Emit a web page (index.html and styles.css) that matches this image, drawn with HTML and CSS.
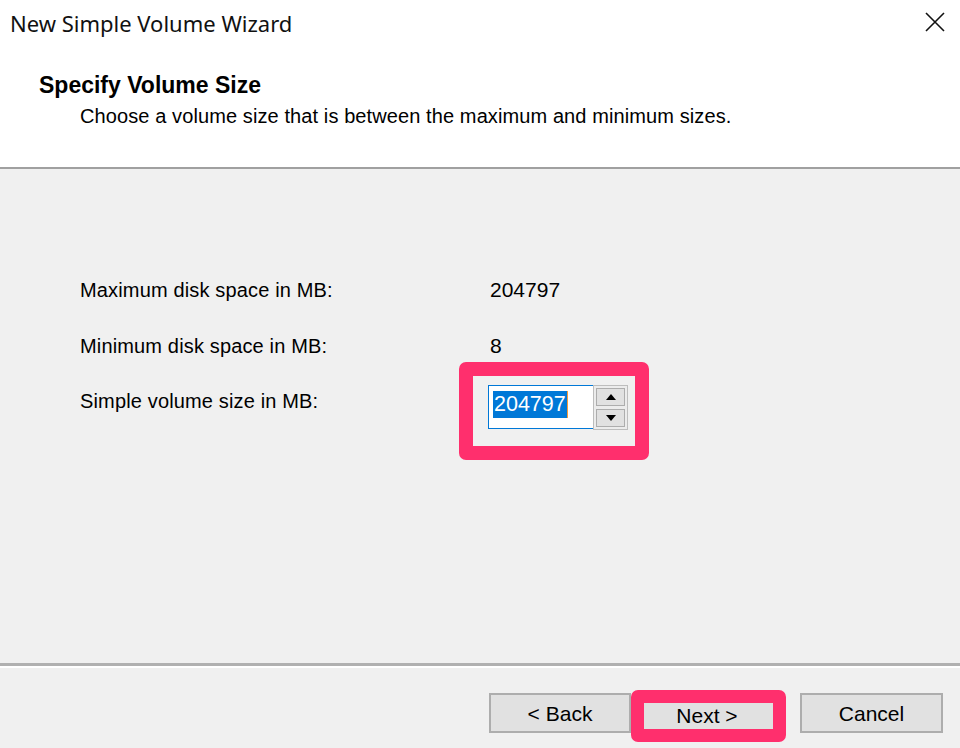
FILE: index.html
```html
<!DOCTYPE html>
<html>
<head>
<meta charset="utf-8">
<title>New Simple Volume Wizard</title>
<link rel="stylesheet" href="styles.css">
</head>
<body>
<div class="window">
  <div class="header">
    <div class="titlebar">
      <div class="title">New Simple Volume Wizard</div>
      <svg class="close" width="20" height="20" viewBox="0 0 20 20"><path d="M1 1 L19 19 M19 1 L1 19" stroke="#111" stroke-width="1.6" fill="none"/></svg>
    </div>
    <div class="heading">Specify Volume Size</div>
    <div class="subheading">Choose a volume size that is between the maximum and minimum sizes.</div>
  </div>
  <div class="content">
    <div class="row row1">
      <div class="label">Maximum disk space in MB:</div>
      <div class="value">204797</div>
    </div>
    <div class="row row2">
      <div class="label">Minimum disk space in MB:</div>
      <div class="value">8</div>
    </div>
    <div class="row row3">
      <div class="label label3">Simple volume size in MB:</div>
      <div class="highlight">
        <div class="spin">
          <div class="field"><span class="sel">204797</span></div>
          <div class="arrows">
            <div class="arrow"><svg width="10" height="6" viewBox="0 0 10 6"><path d="M0 6 L5 0 L10 6 Z" fill="#000"/></svg></div>
            <div class="arrow"><svg width="10" height="6" viewBox="0 0 10 6"><path d="M0 0 L5 6 L10 0 Z" fill="#000"/></svg></div>
          </div>
        </div>
      </div>
    </div>
  </div>
  <div class="sep"></div>
  <div class="footer">
    <div class="btn">&lt; Back</div>
    <div class="btn next">Next &gt;</div>
    <div class="btn cancel">Cancel</div>
  </div>
</div>
</body>
</html>
```
FILE: styles.css
```css
html, body {
  margin: 0;
  padding: 0;
}
body {
  width: 960px;
  height: 748px;
  overflow: hidden;
  background: #f0f0f0;
  font-family: "Liberation Sans", Arial, sans-serif;
  color: #000;
}
.window {
  width: 960px;
  height: 748px;
  display: flex;
  flex-direction: column;
}
.header {
  height: 167px;
  background: #fff;
  border-bottom: 2px solid #a0a0a0;
  box-sizing: content-box;
}
.titlebar {
  display: flex;
  justify-content: space-between;
  align-items: flex-start;
  padding: 8px 15px 0 10px;
  height: 30px;
}
.title {
  font-family: "Noto Sans", "Open Sans", sans-serif;
  font-size: 22px;
  line-height: 30px;
  color: #111;
}
.close {
  margin-top: 4px;
}
.heading {
  margin-top: 33px;
  padding-left: 39px;
  font-weight: bold;
  font-size: 23px;
  line-height: 28px;
}
.subheading {
  margin-top: 5px;
  padding-left: 80px;
  font-size: 20px;
  line-height: 24px;
  letter-spacing: 0.1px;
}
.content {
  height: 494px;
  padding-left: 80px;
  box-sizing: border-box;
  padding-top: 109px;
}
.row {
  display: flex;
  align-items: flex-start;
  font-size: 20px;
  line-height: 24px;
}
.row2 {
  margin-top: 32px;
}
.row3 {
  margin-top: 27px;
}
.label {
  width: 410px;
  letter-spacing: 0.15px;
}
.label3 {
  margin-top: 4px;
}
.value {
  font-size: 21px;
}
.highlight {
  margin: -23px -21px -30px -31px;
  border: 14px solid #ff2f6d;
  border-radius: 7px;
  padding: 9px 7px 16px 15px;
  background: #f0f0f0;
}
.spin {
  display: flex;
  align-items: flex-start;
}
.field {
  width: 105px;
  height: 44px;
  border: 1px solid #0078d7;
  border-right: none;
  background: #fff;
  padding: 5px 0 0 4px;
  box-sizing: border-box;
}
.sel {
  display: inline-block;
  background: #0078d7;
  color: #fff;
  font-size: 21.5px;
  line-height: 27px;
  padding: 0 1px 0 1px;
  border-right: 1px solid #f39a3a;
}
.arrows {
  width: 35px;
  height: 45px;
  box-sizing: border-box;
  border: 1px solid #bdbdbd;
  background: #ececec;
  padding: 2px;
  display: flex;
  flex-direction: column;
  gap: 3px;
}
.arrow {
  flex: 1;
  border: 1px solid #adadad;
  background: #e1e1e1;
  display: flex;
  align-items: center;
  justify-content: center;
}
.sep {
  border-top: 3px solid #b0b0b0;
  border-bottom: 2px solid #fff;
}
.footer {
  display: flex;
  justify-content: flex-end;
  align-items: flex-start;
  padding: 25px 17px 0 0;
}
.btn {
  width: 142px;
  height: 40px;
  box-sizing: border-box;
  border: 2px solid #adadad;
  background: #e1e1e1;
  font-size: 21px;
  line-height: 37px;
  text-align: center;
}
.next {
  width: 155px;
  height: 52px;
  margin-top: -3px;
  border: 13px solid #ff2f6d;
  border-radius: 7px;
  line-height: 25px;
  padding-right: 3px;
}
.cancel {
  width: 143px;
  margin-left: 14px;
}
```
